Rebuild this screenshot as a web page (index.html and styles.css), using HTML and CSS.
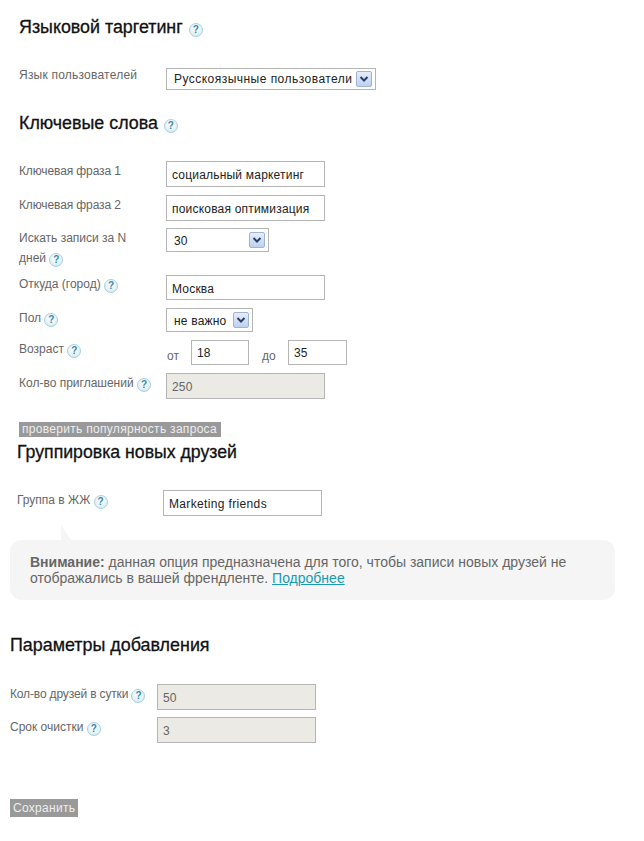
FILE: index.html
```html
<!DOCTYPE html>
<html lang="ru">
<head>
<meta charset="utf-8">
<title>Таргетинг</title>
<link rel="stylesheet" href="styles.css">
</head>
<body>
<section class="block block-a">
  <h2 class="title first">Языковой таргетинг <span class="help">?</span></h2>
  <div class="row row-lang">
    <div class="label label-lang">Язык пользователей</div>
    <div class="select select-lang"><span class="val">Русскоязычные пользователи</span><span class="arrow"><svg viewBox="0 0 10 8" width="10" height="8"><path d="M1.5 2 L5 5.5 L8.5 2" fill="none" stroke="#2b3f6b" stroke-width="2"/></svg></span></div>
  </div>
  <h2 class="title second">Ключевые слова <span class="help">?</span></h2>
  <div class="row row-kw1">
    <div class="label label-kw">Ключевая фраза 1</div>
    <div class="input">социальный маркетинг</div>
  </div>
  <div class="row">
    <div class="label label-kw">Ключевая фраза 2</div>
    <div class="input">поисковая оптимизация</div>
  </div>
  <div class="row row-tight">
    <div class="label label-two">Искать записи за N дней <span class="help">?</span></div>
    <div class="select select-days"><span class="val">30</span><span class="arrow"><svg viewBox="0 0 10 8" width="10" height="8"><path d="M1.5 2 L5 5.5 L8.5 2" fill="none" stroke="#2b3f6b" stroke-width="2"/></svg></span></div>
  </div>
  <div class="row row-tight">
    <div class="label label-up">Откуда (город) <span class="help">?</span></div>
    <div class="input input-short">Москва</div>
  </div>
  <div class="row">
    <div class="label">Пол <span class="help">?</span></div>
    <div class="select select-sex"><span class="val">не важно</span><span class="arrow"><svg viewBox="0 0 10 8" width="10" height="8"><path d="M1.5 2 L5 5.5 L8.5 2" fill="none" stroke="#2b3f6b" stroke-width="2"/></svg></span></div>
  </div>
  <div class="row">
    <div class="label label-up">Возраст <span class="help">?</span></div>
    <div class="age">
      <span class="age-word">от</span>
      <div class="input input-age">18</div>
      <span class="age-word age-to">до</span>
      <div class="input input-age2">35</div>
    </div>
  </div>
  <div class="row">
    <div class="label">Кол-во приглашений <span class="help">?</span></div>
    <div class="input disabled">250</div>
  </div>
  <div class="button button-check">проверить популярность запроса</div>
</section>

<section class="block block-b">
  <h2 class="title third">Группировка новых друзей</h2>
  <div class="row row-group">
    <div class="label">Группа в ЖЖ <span class="help">?</span></div>
    <div class="input input-group">Marketing friends</div>
  </div>
</section>

<div class="notice">
  <b>Внимание:</b> данная опция предназначена для того, чтобы записи новых друзей не отображались в вашей френдленте. <a href="#">Подробнее</a>
</div>

<section class="block block-c">
  <h2 class="title fourth">Параметры добавления</h2>
  <div class="row row-add1">
    <div class="label label-add">Кол-во друзей в сутки <span class="help">?</span></div>
    <div class="input disabled">50</div>
  </div>
  <div class="row row-add2">
    <div class="label">Срок очистки <span class="help">?</span></div>
    <div class="input disabled">3</div>
  </div>
  <div class="button button-save">Сохранить</div>
</section>
</body>
</html>
```
FILE: styles.css
```css
* { box-sizing: border-box; }
html, body { margin: 0; padding: 0; background: #fff; }
body {
  width: 644px;
  height: 841px;
  overflow: hidden;
  font-family: "Liberation Sans", Arial, sans-serif;
  font-size: 12px;
  color: #666;
}
.block-a { padding-left: 19px; }
.block-b { padding-left: 17px; }
.block-c { padding-left: 10px; }

.title {
  margin: 0;
  font-size: 17.85px;
  line-height: 20px;
  font-weight: normal;
  color: #111;
  -webkit-text-stroke: 0.3px #111;
}
.first { padding-top: 17px; }
.second { margin-top: 23px; }
.third { margin-top: 5px; font-size: 17.7px; }
.fourth { margin-top: 35px; font-size: 17.9px; }

.help {
  display: inline-block;
  width: 14px;
  height: 14px;
  margin: -4px 0;
  border-radius: 50%;
  border: 1px solid #a9d0dc;
  background: radial-gradient(circle at 50% 35%, #fff 0%, #e4f2f7 60%, #bfe0ea 100%);
  color: #3b86a8;
  font-size: 10px;
  font-weight: bold;
  line-height: 12px;
  text-align: center;
  vertical-align: -1px;
  -webkit-text-stroke: 0;
}
.title .help { margin-left: 1px; vertical-align: 0; }

.row {
  display: flex;
  align-items: flex-start;
  margin-top: 8px;
}
.label {
  width: 147px;
  flex: none;
  line-height: 20px;
}
.label-two { padding-right: 12px; }
.label-kw { letter-spacing: -0.12px; }
.label-add { letter-spacing: -0.15px; }
.label-up { margin-top: -1px; }
.row-lang { margin-top: 31px; }
.label-lang { margin-top: -3px; letter-spacing: 0.22px; }
.row-kw1 { margin-top: 28px; }
.row-tight { margin-top: 7px; }

.input {
  width: 159px;
  height: 26px;
  border: 1px solid #b5b5b5;
  background: #fff;
  color: #222;
  padding: 1px 0 0 5px;
  line-height: 25px;
  letter-spacing: 0.2px;
}
.input.disabled { background: #ebeae4; color: #666; }
.input-group { letter-spacing: 0.35px; }
.input-short { height: 25px; }

.select {
  height: 24px;
  border: 1px solid #b5b5b5;
  background: #fff;
  color: #222;
  display: flex;
  align-items: center;
  justify-content: space-between;
  padding: 0 3px 0 7px;
  letter-spacing: 0.2px;
}
.val { padding-top: 1px; }
.select-lang { width: 210px; height: 22px; letter-spacing: 0.47px; }
.select-lang .val { padding-top: 0; }
.select-days { width: 103px; }
.select-sex { width: 87px; }
.arrow {
  width: 16px;
  height: 16px;
  flex: none;
  display: flex;
  align-items: center;
  justify-content: center;
  border: 1px solid #9db4d6;
  border-radius: 2px;
  background: linear-gradient(#e6eefb, #bfd0ee);
}

.age { display: flex; align-items: flex-start; }
.age-word { width: 25px; padding: 9px 0 0 1px; line-height: 14px; }
.age-to { width: 39px; padding-left: 13px; }
.input-age { width: 58px; height: 25px; padding-top: 0; }
.input-age2 { width: 59px; height: 25px; padding-top: 0; }

.button {
  display: inline-block;
  background: #999;
  color: #eee;
  letter-spacing: 0.3px;
}
.button-check {
  display: block;
  width: 202px;
  height: 15px;
  line-height: 15px;
  margin-top: 23px;
  padding-left: 3px;
}
.button-save {
  display: block;
  width: 68px;
  height: 18px;
  line-height: 18px;
  margin-top: 56px;
  padding-left: 3px;
}

.row-group { margin-top: 28px; }
.row-group .label { width: 146px; }

.notice {
  position: relative;
  margin: 24px 29px 0 10px;
  height: 60px;
  background: #f5f5f5;
  border-radius: 12px;
  padding: 14px 20px 0;
  font-size: 14px;
  line-height: 16px;
  color: #666;
}
.notice::before {
  content: "";
  position: absolute;
  left: 51px;
  top: -15px;
  width: 0;
  height: 0;
  border-left: 10px solid #f5f5f5;
  border-top: 15px solid transparent;
}
.notice a { color: #1a9ab0; }

.row-add1 { margin-top: 29px; }
.row-add2 { margin-top: 7px; }
```
